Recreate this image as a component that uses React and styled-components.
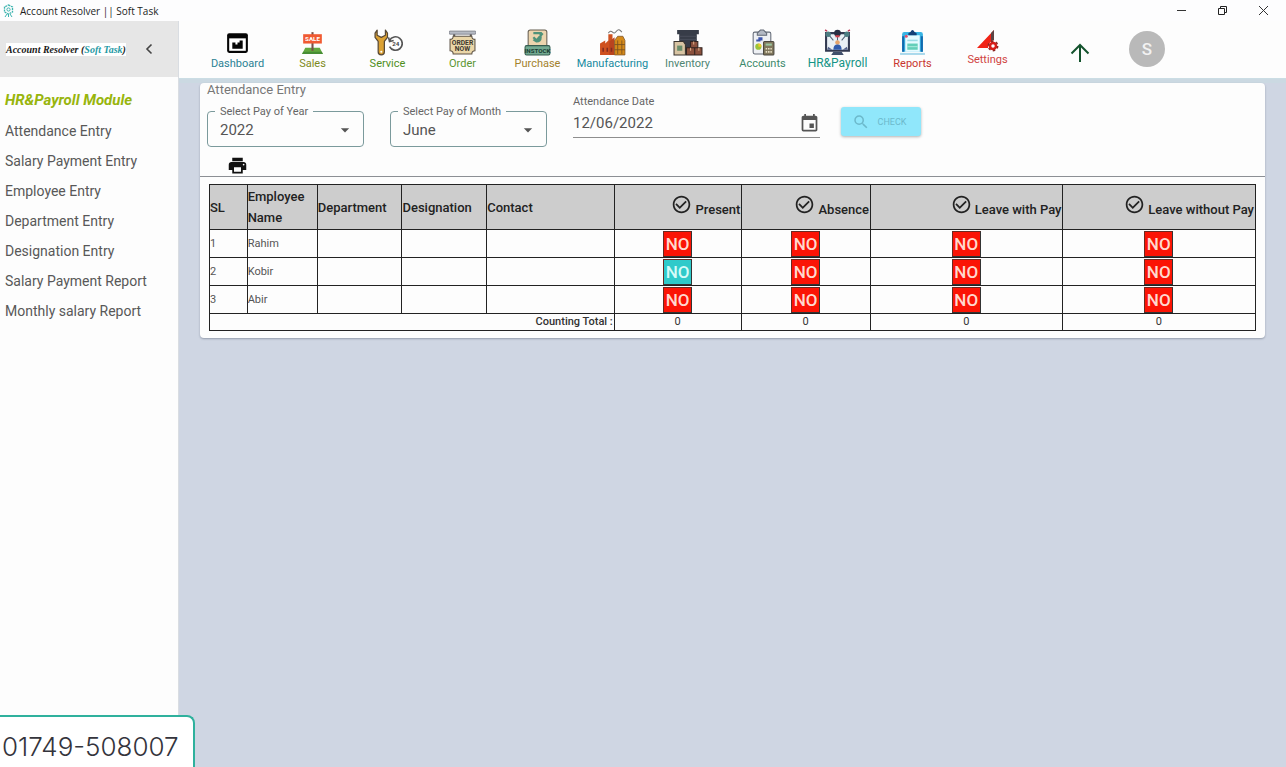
import React, { useState } from 'react';
import styled, { createGlobalStyle } from 'styled-components';
import {
  MdPrint,
  MdSearch,
  MdArrowDropDown,
  MdEvent,
  MdCheckCircleOutline,
} from 'react-icons/md';

const GlobalStyle = createGlobalStyle`
  * {
    box-sizing: border-box;
  }

  body {
    margin: 0;
    font-family: Roboto, 'Liberation Sans', sans-serif;
    background: #cfd6e3;
    color: #555;
  }

  button,
  input,
  select {
    font-family: inherit;
  }
`;

const Page = styled.div`
  min-height: 100vh;
  display: flex;
  flex-direction: column;
`;

const TitleBar = styled.header`
  display: flex;
  align-items: center;
  height: 21px;
  padding-left: 3px;
  gap: 6px;
  background: #fdfdfe;
`;

const WindowTitle = styled.span`
  flex: 1;
  font-family: 'Open Sans', sans-serif;
  font-size: 10px;
  line-height: 20px;
  color: #1c1c1c;
`;

const WindowButtons = styled.div`
  display: flex;
  padding-right: 2px;
`;

const WindowButton = styled.button`
  display: flex;
  align-items: center;
  justify-content: center;
  width: 41px;
  height: 18px;
  padding: 0;
  border: 0;
  background: none;
`;

const Body = styled.div`
  flex: 1;
  display: flex;
`;

const Sidebar = styled.aside`
  width: 179px;
  flex-shrink: 0;
  background: #fdfdfd;
  border-right: 1px solid #d9dde2;
`;

const Brand = styled.div`
  display: flex;
  align-items: center;
  gap: 16px;
  height: 56px;
  padding-left: 6px;
  background: #e6e6e6;
`;

const BrandName = styled.span`
  font-family: 'Liberation Serif', serif;
  font-size: 10px;
  line-height: 13px;
  font-weight: 700;
  font-style: italic;
  color: #1a1a1a;
  background: #fff;
  white-space: nowrap;

  em {
    color: #1f9aa5;
  }
`;

const IconButton = styled.button`
  display: flex;
  padding: 0;
  border: 0;
  background: none;
  color: ${(props) => props.$color || '#555'};
`;

const SideNav = styled.nav`
  display: flex;
  flex-direction: column;
  padding: 9px 5px;
`;

const ModuleName = styled.h2`
  margin: 0;
  font-size: 15px;
  line-height: 29px;
  font-weight: 700;
  font-style: italic;
  color: #98b50d;
`;

const SideLinks = styled.div`
  display: flex;
  flex-direction: column;
  padding-top: 1px;
`;

const SideLink = styled.a`
  font-size: 14px;
  line-height: 30px;
  color: #585858;
  text-decoration: none;
`;

const Main = styled.main`
  flex: 1;
  min-width: 0;
`;

const TopBar = styled.div`
  display: flex;
  align-items: flex-start;
  height: 57px;
  padding: 8px 21px 0;
  background: #fdfdfd;
`;

const Modules = styled.nav`
  display: flex;
`;

const ModuleLink = styled.a`
  display: flex;
  flex-direction: column;
  align-items: center;
  width: 75px;
  font-size: ${(props) => (props.$active ? 12 : 11)}px;
  line-height: 15px;
  color: ${(props) => props.$color};
  text-decoration: none;
`;

const UpButton = styled(IconButton)`
  margin: 14px 0 0 45px;
`;

const Avatar = styled.button`
  width: 36px;
  height: 36px;
  margin: 2px 0 0 39px;
  padding: 0;
  border: 0;
  border-radius: 50%;
  font-size: 17px;
  font-weight: 500;
  color: #f2f2f2;
  background: #b9b9b9;
`;

const Content = styled.div`
  padding: 4px 21px 21px;
  border-top: 1px solid #cbdde4;
  background: linear-gradient(#cbd9e2 0 4px, transparent 4px);
`;

const Card = styled.section`
  background: #fdfdfd;
  border-radius: 4px;
  box-shadow: 0 1px 2px rgba(60, 70, 90, 0.4);
`;

const Form = styled.form`
  display: flex;
  align-items: flex-start;
  padding-left: 7px;
  border-bottom: 1px solid #8c8f94;
`;

const Title = styled.h1`
  margin: 0 0 8px;
  font-size: 13px;
  line-height: 14px;
  font-weight: 400;
  color: #777;
`;

const Selects = styled.div`
  display: flex;
  gap: 26px;
`;

const Outline = styled.fieldset`
  width: 157px;
  height: 42px;
  margin: 0;
  padding: 0 8px 0 12px;
  border: 1px solid #7b9a9c;
  border-radius: 4px;

  legend {
    margin-left: -5px;
    padding: 0 5px;
    font-size: 11px;
    line-height: 13px;
    color: #666;
  }
`;

const SelectRow = styled.div`
  display: grid;
  align-items: center;

  > * {
    grid-area: 1 / 1;
  }

  svg {
    justify-self: end;
    pointer-events: none;
  }
`;

const Select = styled.select`
  width: 100%;
  height: 24px;
  padding: 0 0 1px;
  border: 0;
  appearance: none;
  background: transparent;
  font-size: 15px;
  color: #555;
  outline: none;
`;

const PrintButton = styled(IconButton)`
  margin: 8px 0 0 20px;
`;

const DateField = styled.div`
  width: 247px;
  margin: 12px 21px 0 26px;

  label {
    display: block;
    font-size: 11px;
    line-height: 14px;
    color: #666;
  }
`;

const DateRow = styled.div`
  display: flex;
  align-items: center;
  height: 29px;
  border-bottom: 1px solid #8e8e8e;
`;

const DateInput = styled.input`
  flex: 1;
  min-width: 0;
  padding: 0;
  border: 0;
  background: none;
  font-size: 15px;
  color: #555;
  outline: none;
`;

const CheckButton = styled.button`
  display: flex;
  align-items: center;
  justify-content: center;
  gap: 8px;
  width: 80px;
  height: 29px;
  margin-top: 24px;
  padding: 0 4px 0 0;
  border: 0;
  border-radius: 3px;
  font-size: 9px;
  font-weight: 400;
  color: #6cb9cb;
  background: #90e7fb;
  box-shadow: 0 1px 3px rgba(0, 0, 0, 0.3);
`;

const TableWrap = styled.div`
  padding: 7px 9px;
`;

const Table = styled.table`
  width: 100%;
  table-layout: fixed;
  border-collapse: collapse;
  color: #555;

  th,
  td {
    border: 1px solid #222;
    padding: 0 1px 0 0;
  }
`;

const HeadCell = styled.th`
  height: 45px;
  font-size: 13px;
  font-weight: 500;
  line-height: 21px;
  text-align: left;
  color: #222;
  background: #cdcdcd;
`;

const MarkAll = styled.button`
  display: flex;
  align-items: flex-end;
  justify-content: flex-end;
  gap: 3px;
  width: 100%;
  height: 26px;
  padding: 0;
  border: 0;
  background: none;
  font-size: 13px;
  font-weight: 500;
  line-height: 20px;
  color: #222;
  white-space: nowrap;

  svg {
    align-self: flex-start;
  }
`;

const Cell = styled.td`
  height: 28px;
  font-size: 11px;
  text-align: ${(props) => (props.$center ? 'center' : 'left')};
`;

const TotalCell = styled.td`
  height: 17px;
  font-size: 11px;
  line-height: 16px;
  font-weight: ${(props) => (props.$label ? 500 : 400)};
  text-align: ${(props) => (props.$label ? 'right' : 'center')};
  color: #333;
`;

const Mark = styled.button`
  display: block;
  width: 29px;
  height: 26px;
  margin: 0 auto;
  padding: 0;
  border: 1px solid #6b2a22;
  border-right-color: #333;
  border-bottom-color: #333;
  font-size: 17px;
  font-weight: 500;
  line-height: 24px;
  color: ${(props) => (props.$focused ? '#d5fbf8' : '#ffd9cf')};
  background: ${(props) => (props.$focused ? '#2fcaca' : '#fb1405')};
`;

const Phone = styled.a`
  position: fixed;
  left: 0;
  bottom: 0;
  width: 195px;
  height: 52px;
  padding-left: 2px;
  border-top: 2px solid #2fb19d;
  border-right: 2px solid #2fb19d;
  border-radius: 0 8px 0 0;
  background: #fff;
  font-family: Inter, sans-serif;
  font-size: 26px;
  font-weight: 300;
  line-height: 60px;
  color: #34343c;
  text-decoration: none;
`;

const svgProps = { width: 27, height: 27, viewBox: '0 0 26 26', 'aria-hidden': true };

const DashboardIcon = () => (
  <svg {...svgProps}>
    <path d="M5 4h16a2 2 0 0 1 2 2v15a2 2 0 0 1-2 2H5a2 2 0 0 1-2-2V6a2 2 0 0 1 2-2z" fill="#050505" />
    <path d="M5 9h16v12H5z" fill="#fff" />
    <path d="M8 19v-6h3v2h2v-2h2v-2h3v8z" fill="#050505" />
  </svg>
);

const SalesIcon = () => (
  <svg {...svgProps}>
    <path d="M6 18h14l3 6H3z" fill="#62a83e" />
    <path d="M4 22l-1 2h20l-1-2z" fill="#478d35" />
    <path d="M12 3h2v18h-2z" fill="#765147" />
    <path d="M4 5h18v9H4z" fill="#f05a32" />
    <text x="13" y="12" textAnchor="middle" fontSize="6" fontWeight="700" fill="#fff">SALE</text>
  </svg>
);

const ServiceIcon = () => (
  <svg {...svgProps} width="30" viewBox="0 0 29 26">
    <path
      d="M4 1L2 4v4l3 4v10q0 3 3 3t3-3V12l3-4V4l-2-3v5L8 8 4 6z"
      fill="#dba133"
      stroke="#584936"
      strokeWidth="1.2"
      strokeLinejoin="round"
    />
    <circle cx="8" cy="22" r="1" fill="#fff" />
    <path d="M16 11a6.500 6.500 0 1 1 0 6M15 8l1 4 4-1" fill="none" stroke="#555" strokeWidth="1.600" />
    <text x="22" y="16" textAnchor="middle" fontSize="6" fontWeight="700" fill="#444">24</text>
  </svg>
);

const OrderIcon = () => (
  <svg {...svgProps}>
    <path d="M5 3v5M21 3v5" stroke="#59534d" strokeWidth="2" />
    <rect x="0" y="2" width="26" height="3" rx="1" fill="#b6bbc4" stroke="#71737c" strokeWidth=".7" />
    <path d="M4 7h18q0 3 3 3v11q-3 0-3 3H4q0-3-3-3V10q3 0 3-3z" fill="#ead6a8" stroke="#5e5346" />
    <text x="13" y="15" textAnchor="middle" fontSize="6.500" fontWeight="700" fill="#40392f">ORDER</text>
    <text x="13" y="21" textAnchor="middle" fontSize="6.500" fontWeight="700" fill="#40392f">NOW</text>
  </svg>
);

const PurchaseIcon = () => (
  <svg {...svgProps}>
    <rect x="4" y="1" width="18" height="17" rx="2" fill="#ecd5ae" stroke="#655e51" />
    <path
      d="M9 4h7v4q0 4-4 4l-3-2M9 8l3 3 6-7"
      fill="none"
      stroke="#4f937a"
      strokeWidth="2.200"
    />
    <rect x="1" y="16" width="24" height="9" rx="1.500" fill="#73aa91" stroke="#355d50" />
    <text x="13" y="23" textAnchor="middle" fontSize="6" fontWeight="700" fill="#193c32">INSTOCK</text>
  </svg>
);

const ManufacturingIcon = () => (
  <svg {...svgProps}>
    <path d="M9 4q2-3 4-1t4-1 5 1" fill="none" stroke="#777" strokeWidth="1" />
    <path d="M1 25V14l5-3v3l3-3V5h4v20z" fill="#cf5120" />
    <path d="M10 12l5-4v17h-5z" fill="#b9441f" />
    <path d="M15 25V11l3-4h5l2 4v14z" fill="#d58a19" stroke="#77502a" strokeWidth=".7" />
    <path d="M4 18v4M8 18v4M12 18v4" stroke="#812d22" strokeWidth="1.500" />
    <path d="M18 11v13M22 11v13M15 15h10M15 20h10" stroke="#765020" strokeWidth=".8" />
  </svg>
);

const InventoryIcon = () => (
  <svg {...svgProps} width="30" viewBox="0 0 29 26">
    <path d="M4 1h21v4h-2v17H6V5H4z" fill="#373c48" />
    <path d="M6 7h17M6 10h17" stroke="#505563" strokeWidth=".7" />
    <path d="M1 12h9l2 3v10H1z" fill="#d8c4a3" stroke="#38332e" />
    <path d="M4 16h5v5H4z" fill="#6a8d6b" />
    <path d="M17 12h7v6h-7zM13 18h8v7h-8zM21 18h7v7h-7z" fill="#8b513d" stroke="#30231f" />
    <path d="M20 12v3M17 18v3M25 18v3" stroke="#deb08a" />
  </svg>
);

const AccountsIcon = () => (
  <svg {...svgProps}>
    <rect x="4" y="3" width="17" height="21" rx="1.500" fill="#eef0f4" stroke="#626975" />
    <path d="M8 4l3-3h3l3 3v2H8z" fill="#b3b9c4" stroke="#626975" />
    <path d="M7 11h3V9h2v2" stroke="#3d55ac" strokeWidth="2" fill="none" />
    <circle cx="9" cy="17" r="3" fill="#9bc43a" />
    <path d="M9 17v-3a3 3 0 0 1 3 3z" fill="#f2c829" />
    <rect x="14" y="12" width="10" height="13" rx="1" fill="#81785d" stroke="#4a473e" />
    <path d="M16 14h6v2h-6z" fill="#9bc6a0" />
    <path d="M16 19h6M16 22h6" stroke="#e6dec5" strokeWidth="1.500" strokeDasharray="1.500 .8" />
  </svg>
);

const PayrollIcon = () => (
  <svg {...svgProps}>
    <path d="M2 4h22v17H2z" fill="#e9f0f5" stroke="#333a51" strokeWidth="2" />
    <path d="M9 22h8l2 3H7z" fill="#41506c" />
    <path d="M13 3v8M4 5l5 6M22 5l-5 6" stroke="#536177" />
    <circle cx="13" cy="4" r="3.200" fill="#282e43" />
    <circle cx="4" cy="5" r="2.600" fill="#4c7d82" />
    <circle cx="22" cy="5" r="2.600" fill="#4c7d82" />
    <path d="M11 6h4v2h-4z" fill="#d3414e" />
    <circle cx="13" cy="13" r="2.200" fill="#e4a46c" />
    <path d="M9 20q0-5 4-5t4 5z" fill="#315cac" />
    <path d="M4 17l4 3H3zM22 17l-4 3h5z" fill="#54628a" />
    <path d="M1 1l2 1M25 1l-2 1" stroke="#bd3956" strokeWidth="1.500" />
  </svg>
);

const ReportsIcon = () => (
  <svg {...svgProps}>
    <path d="M3 5q0-2 2-2h16q2 0 2 2v17H3z" fill="#39b4e4" />
    <path d="M3 7h2v15H3zM21 7h2v15h-2z" fill="#1269ae" />
    <path d="M6 6h14v16H6z" fill="#e6fbff" />
    <path d="M9 4l2-1q2-4 4 0l2 1v2H9z" fill="#153f75" />
    <path d="M8 11h10" stroke="#9bdce6" strokeWidth="1.500" />
    <path d="M8 14h10v6H8z" fill="#63cfb9" />
    <path d="M8 17h10" stroke="#a9e9dc" />
    <circle cx="7" cy="7" r="1.500" fill="#e1516c" />
    <path d="M1 24h24" stroke="#a9d9ec" strokeWidth="2" />
  </svg>
);

const SettingsIcon = () => (
  <svg {...svgProps} width="24" height="23" viewBox="0 0 24 23">
    <path d="M1 19L18 1v10q-5 1-6 8z" fill="#f12316" />
    <path d="M18 1v10l-3 1V4z" fill="#5d4444" />
    <circle cx="17" cy="17" r="3" fill="none" stroke="#d91d18" strokeWidth="2.500" />
    <circle
      cx="17"
      cy="17"
      r="4.700"
      fill="none"
      stroke="#8d2521"
      strokeWidth="1.500"
      strokeDasharray="2.500 2.400"
    />
  </svg>
);

const AppLogo = () => (
  <svg width="11" height="14" viewBox="0 0 11 14" aria-hidden="true">
    <path d="M5.500 1l4 2v5l-4 2-4-2V3z" fill="none" stroke="#3bb3ae" strokeWidth="1.300" strokeDasharray="2 .7" />
    <circle cx="5.500" cy="5.500" r="1.600" fill="none" stroke="#3bb3ae" />
    <path d="M4 10l-2 3M7 10l2 3M5.500 10v3" stroke="#3bb3ae" />
  </svg>
);

const modules = [
  { name: 'Dashboard', color: '#2a8294', Icon: DashboardIcon },
  { name: 'Sales', color: '#7d8a1b', Icon: SalesIcon },
  { name: 'Service', color: '#4f8f1c', Icon: ServiceIcon },
  { name: 'Order', color: '#5b9632', Icon: OrderIcon },
  { name: 'Purchase', color: '#a3822c', Icon: PurchaseIcon },
  { name: 'Manufacturing', color: '#178aa0', Icon: ManufacturingIcon },
  { name: 'Inventory', color: '#4f8572', Icon: InventoryIcon },
  { name: 'Accounts', color: '#3c8a6c', Icon: AccountsIcon },
  { name: 'HR&Payroll', color: '#149486', Icon: PayrollIcon, active: true },
  { name: 'Reports', color: '#c8352f', Icon: ReportsIcon },
  { name: 'Settings', color: '#d0443f', Icon: SettingsIcon },
];

const sideLinks = [
  'Attendance Entry',
  'Salary Payment Entry',
  'Employee Entry',
  'Department Entry',
  'Designation Entry',
  'Salary Payment Report',
  'Monthly salary Report',
];

const columnWidths = ['3.6%', '6.7%', '8.1%', '8.1%', '12.2%', '12.2%', '12.3%', '18.4%', '18.4%'];
const infoColumns = ['SL', 'Employee Name', 'Department', 'Designation', 'Contact'];
const statuses = ['Present', 'Absence', 'Leave with Pay', 'Leave without Pay'];
const employees = ['Rahim', 'Kobir', 'Abir'];

function OutlinedSelect({ id, label, value }) {
  return (
    <Outline>
      <legend>
        <label htmlFor={id}>{label}</label>
      </legend>
      <SelectRow>
        <Select id={id} defaultValue={value}>
          <option>{value}</option>
        </Select>
        <MdArrowDropDown size={20} />
      </SelectRow>
    </Outline>
  );
}

function AttendanceTable() {
  return (
    <Table>
      <colgroup>
        {columnWidths.map((width, i) => (
          <col key={i} style={{ width }} />
        ))}
      </colgroup>
      <thead>
        <tr>
          {infoColumns.map((name) => (
            <HeadCell key={name}>{name}</HeadCell>
          ))}
          {statuses.map((status) => (
            <HeadCell key={status}>
              <MarkAll type="button">
                <MdCheckCircleOutline size={21} />
                {status}
              </MarkAll>
            </HeadCell>
          ))}
        </tr>
      </thead>
      <tbody>
        {employees.map((name, row) => (
          <tr key={name}>
            <Cell>{row + 1}</Cell>
            <Cell>{name}</Cell>
            <Cell />
            <Cell />
            <Cell />
            {statuses.map((status) => (
              <Cell key={status} $center>
                <Mark
                  type="button"
                  aria-label={`NO, ${name} ${status}`}
                  $focused={name === 'Kobir' && status === 'Present'}
                >
                  NO
                </Mark>
              </Cell>
            ))}
          </tr>
        ))}
      </tbody>
      <tfoot>
        <tr>
          <TotalCell colSpan={5} $label>
            Counting Total :
          </TotalCell>
          {statuses.map((status) => (
            <TotalCell key={status}>0</TotalCell>
          ))}
        </tr>
      </tfoot>
    </Table>
  );
}

function App() {
  const [date, setDate] = useState('12/06/2022');

  return (
    <Page>
      <GlobalStyle />
      <TitleBar>
        <AppLogo />
        <WindowTitle>Account Resolver || Soft Task</WindowTitle>
        <WindowButtons>
          <WindowButton aria-label="Minimize">
            <svg width="11" height="11" viewBox="0 0 11 11" stroke="#333">
              <path d="M1 5.500h9" />
            </svg>
          </WindowButton>
          <WindowButton aria-label="Restore">
            <svg width="11" height="11" viewBox="0 0 11 11" stroke="#222" fill="none">
              <path d="M1.500 3.500h6v6h-6zM3.500 3V1.500h6v6H8" />
            </svg>
          </WindowButton>
          <WindowButton aria-label="Close">
            <svg width="11" height="11" viewBox="0 0 11 11" stroke="#333">
              <path d="M1 1l9 9M10 1l-9 9" />
            </svg>
          </WindowButton>
        </WindowButtons>
      </TitleBar>

      <Body>
        <Sidebar>
          <Brand>
            <BrandName>
              Account Resolver (<em>Soft Task</em>)
            </BrandName>
            <IconButton aria-label="Collapse menu">
              <svg width="14" height="14" viewBox="0 0 14 14" fill="none" stroke="#444" strokeWidth="1.600">
                <path d="M9.500 2.500L5 7l4.500 4.500" />
              </svg>
            </IconButton>
          </Brand>
          <SideNav>
            <ModuleName>HR&amp;Payroll Module</ModuleName>
            <SideLinks>
              {sideLinks.map((link) => (
                <SideLink key={link} href="#">
                  {link}
                </SideLink>
              ))}
            </SideLinks>
          </SideNav>
        </Sidebar>

        <Main>
          <TopBar>
            <Modules>
              {modules.map(({ name, color, Icon, active }) => (
                <ModuleLink key={name} href="#" $color={color} $active={active}>
                  <Icon />
                  {name}
                </ModuleLink>
              ))}
            </Modules>
            <UpButton aria-label="Scroll up">
              <svg width="20" height="20" viewBox="0 0 20 20" fill="none" stroke="#14532d" strokeWidth="2">
                <path d="M10 19V2M1.500 10.500L10 2l8.500 8.500" />
              </svg>
            </UpButton>
            <Avatar aria-label="S, account">S</Avatar>
          </TopBar>

          <Content>
            <Card>
              <Form>
                <div>
                  <Title>Attendance Entry</Title>
                  <Selects>
                    <OutlinedSelect id="pay-year" label="Select Pay of Year" value="2022" />
                    <OutlinedSelect id="pay-month" label="Select Pay of Month" value="June" />
                  </Selects>
                  <PrintButton type="button" aria-label="Print" $color="#111">
                    <MdPrint size={21} />
                  </PrintButton>
                </div>
                <DateField>
                  <label htmlFor="attendance-date">Attendance Date</label>
                  <DateRow>
                    <DateInput
                      id="attendance-date"
                      value={date}
                      onChange={(e) => setDate(e.target.value)}
                    />
                    <IconButton type="button" aria-label="Choose date">
                      <MdEvent size={21} />
                    </IconButton>
                  </DateRow>
                </DateField>
                <CheckButton type="button">
                  <MdSearch size={18} />
                  CHECK
                </CheckButton>
              </Form>
              <TableWrap>
                <AttendanceTable />
              </TableWrap>
            </Card>
          </Content>
        </Main>
      </Body>

      <Phone href="tel:01749508007">01749-508007</Phone>
    </Page>
  );
}

export default App;
